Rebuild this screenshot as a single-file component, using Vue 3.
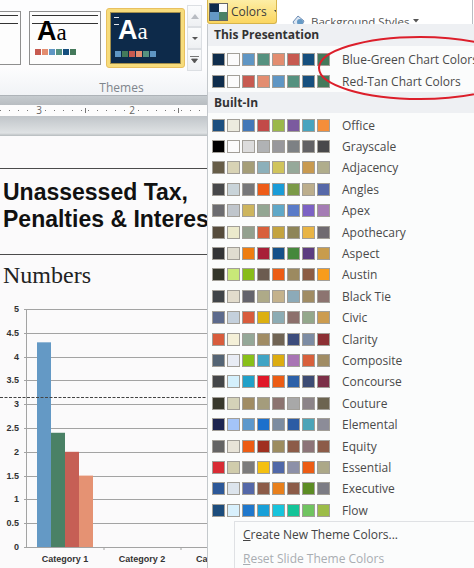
<script setup>
const pres = [
  { name: 'Blue-Green Chart Colors', c: ['#0f2d4c','#fbfbfb','#5f96c4','#55917f','#e38d70','#c75a50','#164f7e','#44795b'] },
  { name: 'Red-Tan Chart Colors', c: ['#0f2d4c','#fbfbfb','#c75a50','#e38d70','#5f96c4','#55917f','#164f7e','#44795b'] },
]
const builtIn = [
  { name: 'Office', c: ['#1c4f80','#ecebdf','#4378b8','#c24a48','#9bb84a','#7b5a9f','#47a4bf','#f58e3a'] },
  { name: 'Grayscale', c: ['#000000','#fbfbfb','#dcdcdc','#b0b2b4','#98989c','#7d8184','#626265','#48484a'] },
  { name: 'Adjacency', c: ['#665d48','#d8d3b5','#a59e78','#8cb0ba','#d0c45c','#96a99a','#c89a50','#b0ad8c'] },
  { name: 'Angles', c: ['#47484a','#c9d4d9','#77787a','#ee5c18','#1a9cd8','#7b9a48','#bcae8c','#5668a8'] },
  { name: 'Apex', c: ['#6c6c70','#c0c6cc','#cdb55e','#93a693','#5fa8c8','#5a7bc8','#7c62c4','#a47cb4'] },
  { name: 'Apothecary', c: ['#564c3c','#eceacc','#93a08e','#d8603c','#c4a440','#8e8558','#e8b445','#6f6a70'] },
  { name: 'Aspect', c: ['#333436','#e0ddd0','#ee7d10','#a82038','#155088','#45883c','#5c3c80','#c89c4c'] },
  { name: 'Austin', c: ['#33352a','#c8e878','#88bc18','#6c5c50','#ec5c14','#9c8a60','#8c5c44','#f89c1c'] },
  { name: 'Black Tie', c: ['#404448','#e2dccc','#64646c','#aeaa88','#c4b28c','#8caab8','#a08c64','#8c7470'] },
  { name: 'Civic', c: ['#5c6a8c','#c4d0dc','#d85c3c','#dcb010','#8cacb4','#8c706c','#94a88c','#cc9c50'] },
  { name: 'Clarity', c: ['#d85c3c','#f4f0d8','#94a898','#a08c64','#706454','#3c4c7c','#7c8ca4','#8c3034'] },
  { name: 'Composite', c: ['#546474','#e8ecf4','#88c018','#40a4c4','#dcac10','#a874b4','#d8603c','#a08c64'] },
  { name: 'Concourse', c: ['#444648','#d4f0fc','#20a0c8','#e01828','#ec5c14','#2c60a8','#3c4c74','#7c3048'] },
  { name: 'Couture', c: ['#38382c','#d4d2b8','#a08c64','#a49c7c','#8c7470','#a8a8a8','#8c8488','#6c6450'] },
  { name: 'Elemental', c: ['#1c2450','#a4c4f8','#5c98cc','#1c70cc','#7c8ca0','#2c5ca4','#4ca4b8','#8c8c98'] },
  { name: 'Equity', c: ['#646464','#e8e4d8','#ec5c14','#a03020','#9c8c60','#8c5c48','#8c7478','#8c5c48'] },
  { name: 'Essential', c: ['#d82c34','#d0ccac','#7c7c7c','#f4c010','#5068a8','#8c90a8','#ec5c14','#aca888'] },
  { name: 'Executive', c: ['#2c5898','#dce4ec','#5468a8','#8c5c48','#e8801c','#8c5c48','#5c8c24','#7c7c84'] },
  { name: 'Flow', c: ['#1c4c7c','#d8f0fc','#2078cc','#18a0d8','#18c4dc','#14c498','#70c460','#9cbc48'] },
]
const yTicks = [
  ['5', 309], ['4.5', 333], ['4', 357], ['3.5', 380], ['3', 404],
  ['2.5', 428], ['2', 452], ['1.5', 476], ['1', 499], ['0.5', 523], ['0', 547],
]
const bars = [
  { x: 37, h: 4.3, fill: '#6499c5' },
  { x: 51, h: 2.4, fill: '#4a8166' },
  { x: 65, h: 2, fill: '#c65f55' },
  { x: 79, h: 1.5, fill: '#e59273' },
]
const themeDots = ['#c75a50','#e38d70','#5f96c4','#55917f','#164f7e','#44795b']
const darkDots = ['#5f96c4','#44795b','#c75a50','#e38d70','#55917f','#5f96c4']
</script>

<template>
  <div class="page">
    <div class="left">
      <div class="ribbon">
        <div class="gallery">
          <div class="thumb partial"><i></i><i></i></div>
          <div class="thumb light">
            <i></i><i></i>
            <div class="aa"><b>A</b><span>a</span></div>
            <div class="dots"><u v-for="d in themeDots" :key="d" :style="{ background: d }"></u></div>
          </div>
          <div class="selected">
            <div class="thumb dark">
              <em></em><em></em>
              <div class="aa"><b>A</b><span>a</span></div>
              <div class="dots"><u v-for="(d, i) in darkDots" :key="i" :style="{ background: d }"></u></div>
            </div>
          </div>
          <div class="scroll">
            <div class="sbtn"><svg width="8" height="5"><path d="M0 5L4 0L8 5Z" fill="#b8bcc2"/></svg></div>
            <div class="sbtn"><svg width="8" height="5"><path d="M1 1L4 4L7 1Z" fill="#555"/></svg></div>
            <div class="sbtn"><svg width="9" height="8"><path d="M0 .5H9M1.500 3L4.500 7L7.500 3Z" fill="#555" stroke="#555" stroke-width=".8"/></svg></div>
          </div>
        </div>
        <div class="group-label">Themes</div>
      </div>
      <div class="band"></div>
      <div class="ruler">
        <span class="dotted"></span><span class="num">3</span><span class="dotted"></span><span class="tick"></span><span class="dotted"></span><span class="num">2</span><span class="dotted"></span><span class="tick"></span><span class="dotted"></span>
      </div>
      <div class="band2"></div>
      <div class="slide">
        <div class="title">Unassessed Tax,<br />Penalties &amp; Interest</div>
        <div class="sub">Numbers</div>
        <svg class="chart" width="207" height="276" viewBox="0 292 207 276">
          <g v-for="t in yTicks" :key="t[0]">
            <line x1="24" x2="207" :y1="t[1] + 0.5" :y2="t[1] + 0.5" stroke="#a3a3a3" />
            <text x="19" :y="t[1] + 3" text-anchor="end" class="tk">{{ t[0] }}</text>
          </g>
          <line x1="26.500" x2="26.500" y1="309" y2="547" stroke="#a3a3a3" />
          <line x1="104" x2="104" y1="547" y2="550" stroke="#a3a3a3" />
          <line x1="181" x2="181" y1="547" y2="550" stroke="#a3a3a3" />
          <rect v-for="b in bars" :key="b.x" :x="b.x" :y="547 - b.h * 47.6" width="14" :height="b.h * 47.6" :fill="b.fill" />
          <line x1="0" x2="207" y1="397.500" y2="397.500" stroke="#444" stroke-dasharray="3 1.500" />
          <text x="65" y="562" text-anchor="middle" class="tk">Category 1</text>
          <text x="142" y="562" text-anchor="middle" class="tk">Category 2</text>
          <text x="196" y="562" class="tk">Category 3</text>
        </svg>
      </div>
    </div>

    <div class="right">
      <div class="topbar">
        <div class="colors-btn">
          <span class="quad"><i style="background:#0f2d4c"></i><i style="background:#fbfbfb"></i><i style="background:#6499c5"></i><i style="background:#4a8166"></i></span>
          <span>Colors</span>
          <svg class="caret" width="6" height="4"><path d="M0 0H6L3 3.500Z" fill="#444"/></svg>
        </div>
        <div class="bg-styles">
          <svg width="16" height="14" viewBox="0 0 16 14"><path d="M5 13L2 8L7 2L13 7L10 13Z" fill="#dce6f2" stroke="#6c8cb4"/><circle cx="9" cy="8" r="3" fill="#6499c5"/></svg>
          <span>Background Styles</span>
          <svg width="6" height="4"><path d="M0 0H6L3 3.500Z" fill="#555"/></svg>
        </div>
      </div>
      <div class="menu">
        <div class="head">This Presentation</div>
        <div class="hi">
          <div v-for="r in pres" :key="r.name" class="row">
            <div class="swatches"><u v-for="(c, i) in r.c" :key="i" :style="{ background: c }"></u></div>
            <span class="name">{{ r.name }}</span>
          </div>
        </div>
        <div class="head second">Built-In</div>
        <div class="list">
          <div v-for="r in builtIn" :key="r.name" class="row">
            <div class="swatches"><u v-for="(c, i) in r.c" :key="i" :style="{ background: c }"></u></div>
            <span class="name">{{ r.name }}</span>
          </div>
        </div>
        <div class="actions">
          <div class="act"><span class="ul">C</span>reate New Theme Colors...</div>
          <div class="act off"><span class="ul">R</span>eset Slide Theme Colors</div>
        </div>
      </div>
      <svg class="ring" width="267" height="80" viewBox="0 0 267 80">
        <ellipse cx="213" cy="34" rx="101" ry="31" fill="none" stroke="#dc1f2b" stroke-width="2" />
      </svg>
    </div>
  </div>
</template>

<style>
body { margin: 0; background: #fff; }
</style>

<style scoped>
.page {
  width: 474px;
  height: 568px;
  display: flex;
  overflow: hidden;
  font-family: "Open Sans", "Noto Sans", sans-serif;
}
.left { width: 207px; flex: none; display: flex; flex-direction: column; overflow: hidden; }
.ribbon {
  height: 96px;
  flex: none;
  background: linear-gradient(#fdfdfe 70%, #f1f3f6);
  border-bottom: 1px solid #aeb3b8;
  box-sizing: border-box;
}
.gallery { display: flex; align-items: flex-start; height: 79px; padding-top: 5px; box-sizing: border-box; margin-left: -51px; gap: 8px; }
.thumb { box-sizing: border-box; position: relative; overflow: hidden; }
.thumb.partial, .thumb.light {
  width: 72px;
  height: 54px;
  margin-top: 6px;
  background: #fdfdfd;
  border: 1px solid #8f8f8f;
  flex: none;
  padding-top: 3px;
}
.thumb i { display: block; height: 1px; background: #333; margin: 0 2px 7px; }
.thumb.light i:nth-child(2) { margin-bottom: 0; }
.thumb.light .aa { margin-top: -6px; margin-left: 7px; color: #000; }
.aa { display: flex; align-items: baseline; line-height: 26px; }
.aa b { font: bold 27px/26px "Liberation Sans", sans-serif; }
.aa span { font: 23px/26px "Liberation Serif", serif; }
.dots { display: flex; gap: 1px; margin-left: 5px; margin-top: 3px; }
.dots u { display: block; width: 6px; height: 6px; }
.selected {
  margin-top: 3px;
  margin-left: -3px;
  width: 79px;
  height: 60px;
  flex: none;
  box-sizing: border-box;
  padding: 3px;
  background: #f7dc7c;
  border: 1px solid #e8c060;
  border-radius: 3px;
}
.thumb.dark { height: 100%; background: #0d2a4a; border: 1px solid #a38f4c; padding-top: 4px; }
.thumb.dark em { display: block; width: 5px; height: 1px; background: #dfe6ee; margin: 0 0 6px 3px; }
.thumb.dark em:nth-child(2) { margin-bottom: 0; }
.thumb.dark .aa { margin-left: 7px; margin-top: -8px; color: #fff; }
.thumb.dark .dots { margin-top: 6px; margin-left: 4px; }
.scroll { display: flex; flex-direction: column; margin-left: -6px; flex: none; }
.sbtn {
  width: 15px;
  height: 22px;
  box-sizing: border-box;
  background: linear-gradient(#fbfcfd, #eef0f3);
  border: 1px solid #dcdfe3;
  display: flex;
  align-items: center;
  justify-content: center;
}
.group-label { text-align: center; font-size: 12px; color: #7f858c; padding-left: 36px; line-height: 18px; }
.band { height: 9px; flex: none; background: linear-gradient(#c6cbcf, #b8bdc1); }
.ruler {
  height: 11px;
  flex: none;
  background: #fcfcfc;
  display: flex;
  align-items: center;
  font-size: 10px;
  color: #666;
  overflow: hidden;
}
.dotted { width: 38px; flex: none; height: 1px; background: repeating-linear-gradient(90deg, #777 0 1px, transparent 1px 9px); }
.dotted:first-child { width: 33px; }
.num { width: 12px; text-align: center; line-height: 11px; flex: none; }
.tick { width: 1px; height: 5px; background: #777; margin: 0 2px; flex: none; }
.band2 { height: 20px; flex: none; background: linear-gradient(#c0c5c9, #dfe2e4 85%, #b5babd); }
.slide { flex: 1; background: #fbfafb; position: relative; overflow: hidden; }
.title {
  margin-top: 32px;
  padding: 10px 0 13px 3px;
  border-top: 1px solid #4b4b4b;
  border-bottom: 1px solid #4b4b4b;
  font: bold 23px/27px "Liberation Sans", sans-serif;
  color: #111;
  white-space: nowrap;
  height: 87px;
  box-sizing: border-box;
}
.sub { font: 24px/28px "Liberation Serif", serif; color: #222; padding-left: 3px; margin-top: 6px; }
.chart { display: block; margin-top: 3px; }
.tk { font: bold 9px "Liberation Sans", sans-serif; fill: #333; }
.right { flex: 1; min-width: 0; position: relative; display: flex; flex-direction: column; }
.topbar { height: 24px; flex: none; display: flex; background: #fff; position: relative; overflow: hidden; border-right: 1px solid #b9bdc2; margin-right: 1px; }
.colors-btn {
  width: 70px;
  height: 24px;
  box-sizing: border-box;
  border: 1px solid #d6b44c;
  border-top: none;
  border-radius: 0 0 3px 3px;
  background: linear-gradient(#fdeea6, #fbd660);
  display: flex;
  align-items: center;
  gap: 3px;
  padding-left: 1px;
  font-size: 12px;
  color: #3c3c3c;
  flex: none;
}
.caret { margin-left: 4px; }
.quad { width: 19px; height: 18px; display: grid; grid-template-columns: 1fr 1fr; border: 1px solid #666; flex: none; box-sizing: border-box; }
.quad i { display: block; }
.bg-styles { display: flex; align-items: center; gap: 4px; font-size: 11.500px; color: #555; margin-left: 14px; padding-top: 18px; height: 24px; box-sizing: border-box; white-space: nowrap; }
.menu { flex: 1; background: #fbfcfc; border-left: 1px solid #c4c8cc; display: flex; flex-direction: column; }
.head { background: #eef0f3; font-weight: 700; font-size: 12px; color: #333; height: 22px; line-height: 22px; padding-left: 6px; flex: none; }
.hi { padding-top: 3px; height: 41px; flex: none; }
.second { margin-top: 2px; height: 21px; line-height: 21px; }
.list { padding-top: 1.500px; }
.row { height: 21.400px; display: flex; align-items: center; white-space: nowrap; overflow: hidden; }
.swatches { display: flex; gap: 2px; margin-left: 4px; width: 120px; flex: none; }
.swatches u { display: block; width: 13px; height: 13px; box-sizing: border-box; border: 1px solid #a29f98; flex: none; }
.name { margin-left: 10px; font-size: 12px; color: #4a4a4a; }
.actions { flex: 1; border-top: 1px solid #dfe1e4; margin-left: 26px; border-left: 1px solid #dfe1e4; padding-top: 1px; }
.act { font-size: 12px; color: #444; padding-left: 8px; height: 24px; line-height: 24px; white-space: nowrap; }
.act.off { color: #a9adb2; }
.ul { text-decoration: underline; }
.ring { position: absolute; left: 0; top: 34px; pointer-events: none; }
</style>
